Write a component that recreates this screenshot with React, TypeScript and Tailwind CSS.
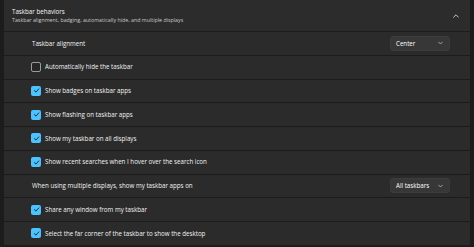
import React from 'react';

const font = { fontFamily: '"Segoe UI", "Open Sans", "Noto Sans", sans-serif' };

function Checkbox({ checked }: { checked: boolean }) {
  if (!checked) {
    return <div className="w-[10px] h-[10px] rounded-[2px] border border-[#9b9b9b] bg-[#262626] shrink-0" />;
  }
  return (
    <div className="w-[10px] h-[10px] rounded-[2px] bg-[#4cc2ff] flex items-center justify-center shrink-0">
      <svg width="7" height="7" viewBox="0 0 10 10" fill="none">
        <path d="M2 5.2 L4.2 7.3 L8.2 2.8" stroke="#1a1a1a" strokeWidth="1.3" strokeLinecap="round" strokeLinejoin="round" />
      </svg>
    </div>
  );
}

function Dropdown({ label }: { label: string }) {
  return (
    <div className="w-[60px] h-[15px] rounded-[3px] bg-[#373737] border border-[#3d3d3d] flex items-center justify-between pl-[5px] pr-[6px]">
      <span className="text-[6.2px] text-white">{label}</span>
      <svg width="5" height="4" viewBox="0 0 10 6" fill="none">
        <path d="M1 1 L5 5 L9 1" stroke="#cfcfcf" strokeWidth="1.4" strokeLinecap="round" strokeLinejoin="round" />
      </svg>
    </div>
  );
}

function CheckRow({ label, checked }: { label: string; checked: boolean }) {
  return (
    <div className="h-[22.75px] bg-[#2b2b2b] flex items-center pl-[27px] gap-[4px]">
      <Checkbox checked={checked} />
      <span className="text-[6.2px] text-[#f2f2f2]">{label}</span>
    </div>
  );
}

function SelectRow({ label, value }: { label: string; value: string }) {
  return (
    <div className="h-[22.75px] bg-[#2b2b2b] flex items-center justify-between pl-[28px] pr-[20px]">
      <span className="text-[6.2px] text-[#f2f2f2]">{label}</span>
      <Dropdown label={value} />
    </div>
  );
}

export default function App() {
  return (
    <div className="w-[474px] h-[247px] bg-[#1c1c1c] overflow-hidden" style={font}>
      <div className="ml-[4px] mr-[4px] flex flex-col gap-px">
        <div className="h-[31px] bg-[#2c2c2c] flex items-center justify-between pl-[8px] pr-[11px]">
          <div className="flex flex-col leading-none gap-[3px] mt-[2px]">
            <span className="text-[6.2px] text-[#f5f5f5]">Taskbar behaviors</span>
            <span className="text-[5.3px] text-[#c8c8c8]">Taskbar alignment, badging, automatically hide, and multiple displays</span>
          </div>
          <svg width="6" height="4" viewBox="0 0 10 6" fill="none">
            <path d="M1 5 L5 1 L9 5" stroke="#e0e0e0" strokeWidth="1.4" strokeLinecap="round" strokeLinejoin="round" />
          </svg>
        </div>
        <SelectRow label="Taskbar alignment" value="Center" />
        <CheckRow label="Automatically hide the taskbar" checked={false} />
        <CheckRow label="Show badges on taskbar apps" checked />
        <CheckRow label="Show flashing on taskbar apps" checked />
        <CheckRow label="Show my taskbar on all displays" checked />
        <CheckRow label="Show recent searches when I hover over the search icon" checked />
        <SelectRow label="When using multiple displays, show my taskbar apps on" value="All taskbars" />
        <CheckRow label="Share any window from my taskbar" checked />
        <CheckRow label="Select the far corner of the taskbar to show the desktop" checked />
      </div>
    </div>
  );
}
